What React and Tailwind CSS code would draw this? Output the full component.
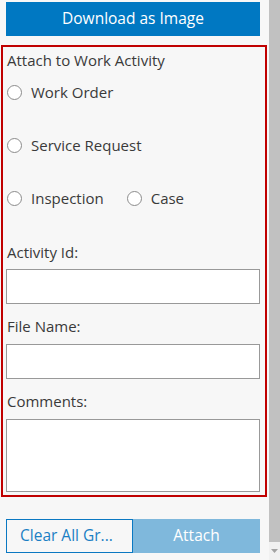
import React, { useState } from "react";

const font = { fontFamily: '"Open Sans", "Noto Sans", sans-serif' };

const Radio = ({ label, checked, onChange }) => (
  <label className="flex items-center h-[20px] cursor-pointer">
    <input
      type="radio"
      name="activity"
      checked={checked}
      onChange={onChange}
      className="appearance-none w-[15px] h-[15px] rounded-full border border-[#8c8c8c] bg-white checked:border-[4px] checked:border-[#0078c2] m-0 ml-[1px]"
    />
    <span className="ml-[9px] text-[15px] text-[#3a3a3a]">{label}</span>
  </label>
);

const App = () => {
  const [activity, setActivity] = useState("");

  return (
    <div className="flex w-[280px] h-[560px] overflow-hidden bg-[#f7f7f7]" style={font}>
      {/* content */}
      <div className="w-[269px] pt-[2px] flex flex-col">
        <button className="mx-[6px] h-[34px] w-[254px] bg-[#0078c2] text-white text-[15.5px]">
          Download as Image
        </button>

        {/* Attach box */}
        <div className="mt-[9px] ml-[1px] w-[266px] border-2 border-[#c00000] pl-[3px] pr-[5px] pt-[3px] pb-[3px]">
          <div className="h-[20px] leading-[20px] text-[15px] text-[#3a3a3a] pl-[1px]">Attach to Work Activity</div>

          <div className="mt-[12px]">
            <Radio label="Work Order" checked={activity === "wo"} onChange={() => setActivity("wo")} />
          </div>
          <div className="mt-[33px]">
            <Radio label="Service Request" checked={activity === "sr"} onChange={() => setActivity("sr")} />
          </div>
          <div className="mt-[33px] flex gap-[22px]">
            <Radio label="Inspection" checked={activity === "in"} onChange={() => setActivity("in")} />
            <Radio label="Case" checked={activity === "ca"} onChange={() => setActivity("ca")} />
          </div>

          <div className="mt-[34px] h-[20px] leading-[20px] text-[15px] text-[#3a3a3a] pl-[1px]">Activity Id:</div>
          <input
            type="text"
            className="mt-[7px] block w-[254px] h-[35px] border border-[#999] bg-white px-2 text-[14px] outline-none"
          />

          <div className="mt-[12px] h-[20px] leading-[20px] text-[15px] text-[#3a3a3a] pl-[1px]">File Name:</div>
          <input
            type="text"
            className="mt-[8px] block w-[254px] h-[35px] border border-[#999] bg-white px-2 text-[14px] outline-none"
          />

          <div className="mt-[12px] h-[20px] leading-[20px] text-[15px] text-[#3a3a3a] pl-[1px]">Comments:</div>
          <textarea className="mt-[8px] block w-[254px] h-[73px] border border-[#999] bg-white px-2 text-[14px] outline-none resize-none" />
        </div>

        {/* buttons */}
        <div className="mt-[22px] mx-[6px] flex h-[34px]">
          <button className="w-[127px] h-full border border-[#0a78c2] bg-[#f7f7f7] text-[#1a7fc4] text-[15.5px] pl-[13px] text-left whitespace-nowrap">
            Clear All Gr...
          </button>
          <button className="w-[127px] h-full bg-[#7fb8dc] text-white text-[15.5px]">Attach</button>
        </div>
      </div>

      {/* scrollbar */}
      <div className="w-[11px] h-full flex flex-col bg-[#f1f1f1]">
        <div className="flex-1 bg-[#c1c1c1]" />
        <div className="h-[18px] flex items-center justify-center">
          <svg width="7" height="4" viewBox="0 0 7 4">
            <path d="M0 0 L7 0 L3.5 4 Z" fill="#a3a3a3" />
          </svg>
        </div>
      </div>
    </div>
  );
};

export default App;
